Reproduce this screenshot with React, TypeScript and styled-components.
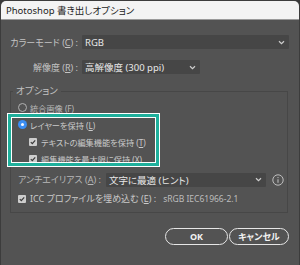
import React from "react";
import styled, { createGlobalStyle } from "styled-components";

const Global = createGlobalStyle`
  html, body { margin: 0; padding: 0; background: #3a3a3a; }
  body { font-family: "Noto Sans CJK JP", "Noto Sans", sans-serif; }
`;

const Window = styled.div`
  width: 300px;
  height: 265px;
  box-sizing: border-box;
  border: 1px solid #3c3c3c;
  border-bottom: none;
  border-radius: 6px 6px 0 0;
  overflow: hidden;
  display: flex;
  flex-direction: column;
  background: #535353;
  font-family: "Noto Sans", "Noto Sans CJK JP", sans-serif;
  font-feature-settings: "palt";
  font-size: 9px;
  color: #c6c6c6;
`;

const TitleBar = styled.div`
  height: 18px;
  flex: none;
  background: #f3f3f3;
  border-bottom: 1px solid #9a9a9a;
  display: flex;
  align-items: center;
  padding-left: 5px;
  color: #1b1b1b;
  font-size: 9.5px;
`;

const Body = styled.div`
  flex: 1;
  padding: 15px 10px 0 9px;
  display: flex;
  flex-direction: column;
`;

const FieldRow = styled.div<{ $gap?: number }>`
  display: grid;
  grid-template-columns: 68px auto;
  column-gap: 4px;
  align-items: center;
  margin-top: ${(p) => p.$gap ?? 0}px;
  justify-content: start;
`;

const Label = styled.span`
  text-align: right;
  white-space: nowrap;
  color: #c4c4c4;
`;

const Select = styled.div<{ $w: number }>`
  width: ${(p) => p.$w}px;
  height: 14px;
  box-sizing: border-box;
  background: #464646;
  border-radius: 1px;
  padding: 0 4px 0 3px;
  display: flex;
  align-items: center;
  justify-content: space-between;
  color: #e8e8e8;
  font-size: 9.5px;
  white-space: nowrap;
`;

const Fieldset = styled.fieldset`
  margin: 11px 1px 0 0;
  padding: 2px 0 5px 0;
  border: 1px solid #474747;
  min-width: 0;
`;

const Legend = styled.legend`
  margin-left: 2px;
  padding: 0 3px;
  line-height: 12px;
  font-size: 9.5px;
  color: #c2c2c2;
`;

const GroupContent = styled.div`
  padding-left: 7px;
  display: flex;
  flex-direction: column;
`;

const OptRow = styled.div<{ $indent?: number; $gap?: number }>`
  height: 17px;
  display: flex;
  align-items: center;
  padding-left: ${(p) => p.$indent ?? 0}px;
  margin-top: ${(p) => p.$gap ?? 0}px;
  white-space: nowrap;
`;

const Radio = styled.span<{ $on?: boolean }>`
  width: 9px;
  height: 9px;
  box-sizing: border-box;
  border-radius: 50%;
  margin-right: 3px;
  flex: none;
  display: flex;
  align-items: center;
  justify-content: center;
  border: ${(p) => (p.$on ? "none" : "1px solid #b0b0b0")};
  background: ${(p) => (p.$on ? "#3b8ef3" : "transparent")};
  &::after {
    content: "";
    display: ${(p) => (p.$on ? "block" : "none")};
    width: 3px;
    height: 3px;
    border-radius: 50%;
    background: #f4f8ff;
  }
`;

const Highlight = styled.div`
  position: relative;
  display: flex;
  flex-direction: column;
  &::before {
    content: "";
    position: absolute;
    left: -10px;
    top: -2px;
    bottom: 1px;
    width: 151px;
    box-sizing: border-box;
    border: 3px solid #1fb09c;
    box-shadow: 0 0 0 1px #ffffff, inset 0 0 0 1px #ffffff;
    pointer-events: none;
  }
`;

const Text = styled.span<{ $muted?: boolean; $size?: number }>`
  color: ${(p) => (p.$muted ? "#b8b8b8" : "#cacaca")};
  font-size: ${(p) => p.$size ?? 9}px;
`;

const Info = styled.span`
  margin-left: 6px;
  display: flex;
`;

const Profile = styled.span`
  margin-left: 7px;
  font-size: 8.5px;
  color: #bdbdbd;
`;

const AntiSelect = styled(Select)`
  margin-left: 5px;
`;

const Buttons = styled.div`
  margin-top: 15px;
  display: flex;
  justify-content: flex-end;
  gap: 1px;
`;

const Button = styled.button<{ $w: number }>`
  width: ${(p) => p.$w}px;
  height: 17px;
  box-sizing: border-box;
  border: 1.5px solid #e6e6e6;
  border-radius: 9px;
  background: transparent;
  color: #f2f2f2;
  font-family: "Noto Sans", "Noto Sans CJK JP", sans-serif;
  font-feature-settings: "palt";
  font-weight: 700;
  font-size: 9px;
  padding: 0;
  line-height: 1;
`;

const Chevron = () => (
  <svg width="7" height="5" viewBox="0 0 7 5">
    <path d="M1 1.2 L3.5 3.6 L6 1.2" fill="none" stroke="#cfcfcf" strokeWidth="1.2" />
  </svg>
);

const Check = () => (
  <svg width="8" height="8" viewBox="0 0 8 8" style={{ marginRight: 4, flex: "none" }}>
    <rect x="0" y="0" width="8" height="8" rx="1" fill="#cdcdcd" />
    <path d="M1.8 4.2 L3.3 5.7 L6.2 2.3" fill="none" stroke="#3a3a3a" strokeWidth="1.2" />
  </svg>
);

const InfoIcon = () => (
  <svg width="12" height="12" viewBox="0 0 12 12">
    <circle cx="6" cy="6" r="5.2" fill="none" stroke="#bdbdbd" strokeWidth="1" />
    <circle cx="6" cy="3.6" r="0.7" fill="#bdbdbd" />
    <path d="M6 5.2 V8.8" stroke="#bdbdbd" strokeWidth="1.1" />
  </svg>
);

const OPT = 8.2;

export default function App() {
  return (
    <>
      <Global />
      <Window>
        <TitleBar>Photoshop 書き出しオプション</TitleBar>
        <Body>
          <FieldRow>
            <Label>
              カラーモード (<u>C</u>) :
            </Label>
            <Select $w={207}>
              <span>RGB</span>
              <Chevron />
            </Select>
          </FieldRow>
          <FieldRow $gap={11}>
            <Label>
              解像度 (<u>R</u>) :
            </Label>
            <Select $w={118}>
              <span>高解像度 (300 ppi)</span>
              <Chevron />
            </Select>
          </FieldRow>
          <Fieldset>
            <Legend>オプション</Legend>
            <GroupContent>
              <OptRow>
                <Radio />
                <Text $muted $size={OPT}>
                  統合画像 (<u>F</u>)
                </Text>
              </OptRow>
              <Highlight>
                <OptRow>
                  <Radio $on />
                  <Text $size={OPT}>
                    レイヤーを保持 (<u>L</u>)
                  </Text>
                </OptRow>
                <OptRow $indent={11}>
                  <Check />
                  <Text $size={OPT}>
                    テキストの編集機能を保持 (<u>T</u>)
                  </Text>
                </OptRow>
                <OptRow $indent={11}>
                  <Check />
                  <Text $size={OPT}>
                    編集機能を最大限に保持 (<u>X</u>)
                  </Text>
                </OptRow>
              </Highlight>
              <OptRow $gap={4}>
                <Text $muted>
                  アンチエイリアス (<u>A</u>) :
                </Text>
                <AntiSelect $w={160}>
                  <span>文字に最適 (ヒント)</span>
                  <Chevron />
                </AntiSelect>
                <Info>
                  <InfoIcon />
                </Info>
              </OptRow>
              <OptRow $gap={2}>
                <Check />
                <Text>
                  ICC プロファイルを埋め込む (<u>E</u>) :
                </Text>
                <Profile>sRGB IEC61966-2.1</Profile>
              </OptRow>
            </GroupContent>
          </Fieldset>
          <Buttons>
            <Button $w={63}>OK</Button>
            <Button $w={60}>キャンセル</Button>
          </Buttons>
        </Body>
      </Window>
    </>
  );
}
